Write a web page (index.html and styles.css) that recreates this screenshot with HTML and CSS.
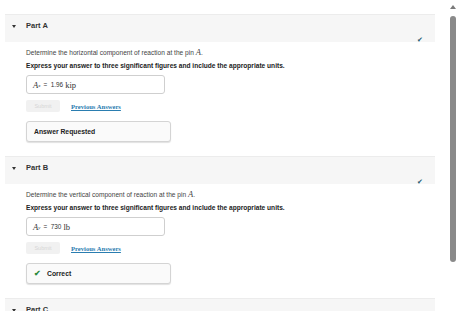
FILE: index.html
```html
<!DOCTYPE html>
<html lang="en">
    <head>
        <meta charset="UTF-8">
        <title>Parts</title>
        <link rel="stylesheet" href="styles.css">
    </head>
    <body>
        <div class="main">
            <div class="part">
                <div class="part-head">
                    <span class="caret"></span>
                    <span class="part-title">Part A</span>
                    <span class="done">&#10004;</span>
                </div>
                <div class="part-body">
                    <p class="ask">Determine the horizontal component of reaction at the pin <i class="var">A</i>.</p>
                    <p class="hint">Express your answer to three significant figures and include the appropriate units.</p>
                    <div class="answer"><i class="var">A</i><sub class="sub">x</sub> = &nbsp;1.96 <span class="unit">kip</span></div>
                    <div class="actions">
                        <span class="submit">Submit</span>
                        <a class="prev" href="#">Previous Answers</a>
                    </div>
                    <div class="result">Answer Requested</div>
                </div>
            </div>
            <div class="part">
                <div class="part-head">
                    <span class="caret"></span>
                    <span class="part-title">Part B</span>
                    <span class="done">&#10004;</span>
                </div>
                <div class="part-body">
                    <p class="ask">Determine the vertical component of reaction at the pin <i class="var">A</i>.</p>
                    <p class="hint">Express your answer to three significant figures and include the appropriate units.</p>
                    <div class="answer"><i class="var">A</i><sub class="sub">y</sub> = &nbsp;730 <span class="unit">lb</span></div>
                    <div class="actions">
                        <span class="submit">Submit</span>
                        <a class="prev" href="#">Previous Answers</a>
                    </div>
                    <div class="result"><span class="ok">&#10004;</span>Correct</div>
                </div>
            </div>
            <div class="part">
                <div class="part-head">
                    <span class="caret"></span>
                    <span class="part-title">Part C</span>
                </div>
            </div>
        </div>
        <div class="scroll">
            <span class="arrow"></span>
            <span class="thumb"></span>
        </div>
    </body>
</html>
```
FILE: styles.css
```css
body {
    margin: 0;
    height: 311px;
    overflow: hidden;
    display: flex;
    font-family: "Liberation Sans", Arial, sans-serif;
    color: #222;
    background-color: #fff;
}
.main {
    width: 435px;
    height: 311px;
    box-sizing: border-box;
    overflow: hidden;
    padding-left: 5px;
    padding-top: 14px;
}
.part {
    margin-bottom: 14px;
}
.part-head {
    height: 28px;
    box-sizing: border-box;
    background-color: #f6f6f6;
    border-top: 1px solid #ececec;
    display: flex;
    align-items: flex-start;
    padding-left: 7px;
    padding-top: 6px;
}
.caret {
    width: 0;
    height: 0;
    margin-top: 4px;
    border-left: 2.5px solid transparent;
    border-right: 2.5px solid transparent;
    border-top: 3px solid #333;
    margin-right: 10px;
}
.part-title {
    font-size: 7.5px;
    line-height: 10px;
    font-weight: bold;
    color: #333;
}
.done {
    margin-left: auto;
    margin-right: 12px;
    align-self: flex-end;
    margin-bottom: -2px;
    font-size: 7px;
    color: #1f5a70;
}
.part-body {
    padding-left: 21px;
}
.ask {
    margin: 6px 0 0;
    font-size: 6.6px;
    line-height: 8px;
    color: #444;
}
.var {
    font-family: "Liberation Serif", "Times New Roman", serif;
    font-size: 8.5px;
}
.hint {
    margin: 5px 0 0;
    font-size: 6.6px;
    font-weight: bold;
    line-height: 8px;
    color: #222;
}
.answer {
    margin-top: 5px;
    width: 139px;
    height: 19px;
    box-sizing: border-box;
    border: 1px solid #cfcfcf;
    border-radius: 3px;
    padding-left: 6px;
    display: flex;
    align-items: center;
    font-size: 6.4px;
    color: #333;
}
.sub {
    font-family: "Liberation Serif", serif;
    font-style: italic;
    font-size: 5px;
    margin-right: 3px;
    vertical-align: baseline;
    position: relative;
    top: 1px;
}
.unit {
    font-family: "Liberation Serif", serif;
    font-size: 8.5px;
    margin-left: 2px;
}
.actions {
    margin-top: 6px;
    display: flex;
    align-items: center;
    gap: 11px;
}
.submit {
    width: 34px;
    height: 12px;
    background-color: #f1f1f1;
    border-radius: 2px;
    font-size: 5.5px;
    color: #d6d6d6;
    display: flex;
    align-items: center;
    justify-content: center;
}
.prev {
    font-family: "Liberation Serif", serif;
    font-size: 6.6px;
    font-weight: bold;
    color: #2a7db0;
}
.result {
    margin-top: 9px;
    width: 145px;
    height: 21px;
    box-sizing: border-box;
    border: 1px solid #d4d4d4;
    border-radius: 3px;
    box-shadow: 0 1px 1px rgba(0, 0, 0, 0.12);
    background-color: #fafafa;
    display: flex;
    align-items: center;
    padding-left: 7px;
    font-size: 6.8px;
    font-weight: bold;
    color: #222;
}
.ok {
    color: #2b8a3a;
    font-size: 8px;
    margin-right: 6px;
}
.scroll {
    width: 34px;
    position: relative;
}
.arrow {
    position: absolute;
    left: 15px;
    top: 5px;
    width: 0;
    height: 0;
    border-left: 3px solid transparent;
    border-right: 3px solid transparent;
    border-bottom: 4px solid #7a7a7a;
}
.thumb {
    position: absolute;
    left: 15px;
    top: 16px;
    width: 6px;
    height: 246px;
    border-radius: 3px;
    background-color: #8a8a8a;
}
```
